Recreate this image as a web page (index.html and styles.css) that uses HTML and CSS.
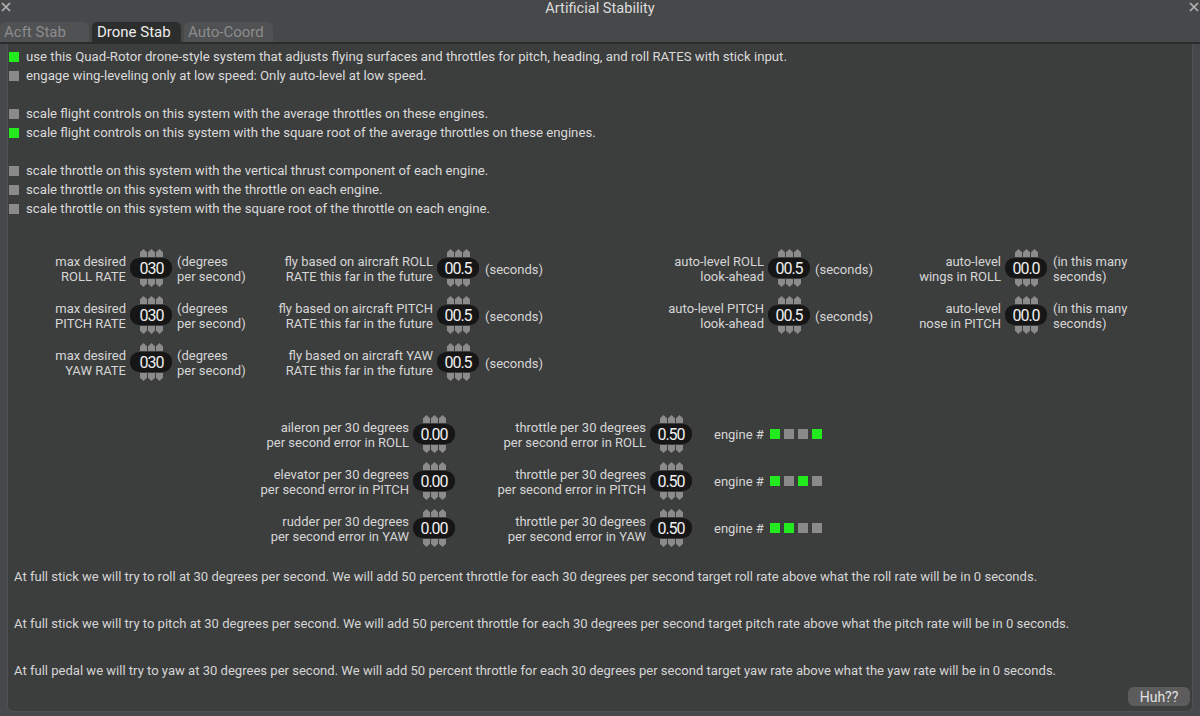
FILE: index.html
```html
<!DOCTYPE html>
<html lang="en">
<head>
    <meta charset="UTF-8">
    <title>Artificial Stability</title>
    <link rel="stylesheet" href="styles.css">
</head>
<body>
    <div class="titlebar">
        <svg class="close" viewBox="0 0 10 10"><path d="M1 1L9 9M9 1L1 9"/></svg>
        <span class="title">Artificial Stability</span>
        <svg class="close" viewBox="0 0 10 10"><path d="M1 1L9 9M9 1L1 9"/></svg>
    </div>
    <div class="tabs">
        <div class="tab">Acft Stab</div>
        <div class="tab active">Drone Stab</div>
        <div class="tab">Auto-Coord</div>
    </div>
    <div class="panel">
        <ul class="opts">
            <li><i class="chk on"></i>use this Quad-Rotor drone-style system that adjusts flying surfaces and throttles for pitch, heading, and roll RATES with stick input.</li>
            <li><i class="chk"></i>engage wing-leveling only at low speed: Only auto-level at low speed.</li>
            <li class="blank"></li>
            <li><i class="chk"></i>scale flight controls on this system with the average throttles on these engines.</li>
            <li><i class="chk on"></i>scale flight controls on this system with the square root of the average throttles on these engines.</li>
            <li class="blank"></li>
            <li><i class="chk"></i>scale throttle on this system with the vertical thrust component of each engine.</li>
            <li><i class="chk"></i>scale throttle on this system with the throttle on each engine.</li>
            <li><i class="chk"></i>scale throttle on this system with the square root of the throttle on each engine.</li>
        </ul>

        <div class="rates" id="rates"></div>
        <div class="gains" id="gains"></div>

        <div class="notes">
            <p>At full stick we will try to roll at 30 degrees per second. We will add 50 percent throttle for each 30 degrees per second target roll rate above what the roll rate will be in 0 seconds.</p>
            <p>At full stick we will try to pitch at 30 degrees per second. We will add 50 percent throttle for each 30 degrees per second target pitch rate above what the pitch rate will be in 0 seconds.</p>
            <p>At full pedal we will try to yaw at 30 degrees per second. We will add 50 percent throttle for each 30 degrees per second target yaw rate above what the yaw rate will be in 0 seconds.</p>
        </div>
        <div class="foot"><button class="huh">Huh??</button></div>
    </div>
    <script>
        // each spinner: label, value, unit
        const rates = [
            ["max desired<br>ROLL RATE", "030", "(degrees<br>per second)"],
            ["fly based on aircraft ROLL<br>RATE this far in the future", "00.5", "(seconds)"],
            ["auto-level ROLL<br>look-ahead", "00.5", "(seconds)"],
            ["auto-level<br>wings in ROLL", "00.0", "(in this many<br>seconds)"],
            ["max desired<br>PITCH RATE", "030", "(degrees<br>per second)"],
            ["fly based on aircraft PITCH<br>RATE this far in the future", "00.5", "(seconds)"],
            ["auto-level PITCH<br>look-ahead", "00.5", "(seconds)"],
            ["auto-level<br>nose in PITCH", "00.0", "(in this many<br>seconds)"],
            ["max desired<br>YAW RATE", "030", "(degrees<br>per second)"],
            ["fly based on aircraft YAW<br>RATE this far in the future", "00.5", "(seconds)"],
            null,
            null
        ];

        const gains = [
            ["aileron per 30 degrees<br>per second error in ROLL", "0.00", "throttle per 30 degrees<br>per second error in ROLL", "0.50", [1, 0, 0, 1]],
            ["elevator per 30 degrees<br>per second error in PITCH", "0.00", "throttle per 30 degrees<br>per second error in PITCH", "0.50", [1, 0, 1, 0]],
            ["rudder per 30 degrees<br>per second error in YAW", "0.00", "throttle per 30 degrees<br>per second error in YAW", "0.50", [1, 1, 0, 0]]
        ];

        function spinner(value) {
            let digits = "";
            for (const ch of value) {
                digits += ch === "." ? `<span class="pt">.</span>` : `<span class="dg">${ch}</span>`;
            }
            return `<div class="spin">
                <div class="arrows up"><i></i><i></i><i></i></div>
                <div class="val${value.includes(".") ? " dec" : ""}">${digits}</div>
                <div class="arrows down"><i></i><i></i><i></i></div>
            </div>`;
        }

        let html = "";
        rates.forEach(item => {
            if (!item) {
                html += `<div></div><div></div><div></div>`;
                return;
            }
            html += `<div class="lbl">${item[0]}</div>${spinner(item[1])}<div class="unit">${item[2]}</div>`;
        });
        document.getElementById("rates").innerHTML = html;

        html = "";
        gains.forEach(item => {
            let leds = item[4].map(on => `<i class="chk${on ? " on" : ""}"></i>`).join("");
            html += `<div class="lbl">${item[0]}</div>${spinner(item[1])}
                <div class="lbl">${item[2]}</div>${spinner(item[3])}
                <div class="engine">engine #<span class="leds">${leds}</span></div>`;
        });
        document.getElementById("gains").innerHTML = html;
    </script>
</body>
</html>
```

FILE: styles.css
```css
body { margin: 0; width: 1200px; height: 716px; overflow: hidden; background: #474849; font-family: Roboto, "Liberation Sans", sans-serif; font-size: 13px; color: #d6d6d6; display: flex; flex-direction: column; }

.titlebar { height: 20px; display: flex; align-items: flex-start; justify-content: space-between; padding: 0 1px; }
.title { font-size: 14.6px; line-height: 16px; color: #dcdcdc; }
.close { width: 10px; height: 10px; margin-top: 2px; }
.close path { stroke: #b4b4b4; stroke-width: 1.7; fill: none; }

.tabs { display: flex; gap: 3px; height: 20px; margin-top: 2px; border-bottom: 2px solid #2a2b2b; }
.tab { width: 89px; background: #505153; color: #8c8c8c; font-size: 15px; line-height: 20px; padding-left: 4px; box-sizing: border-box; border-radius: 5px 5px 0 0; }
.tab.active { background: #2c2d2d; color: #ececec; padding-left: 5px; }

.panel { flex: 1; margin: 0 7px 4px; background: #3c3d3d; border: 1px solid #4f5051; border-top: none; border-radius: 0 0 6px 6px; display: flex; flex-direction: column; }

.opts { list-style: none; margin: 0; padding: 3px 0 0 1px; font-size: 13.2px; }
.opts li { height: 19px; display: flex; align-items: center; gap: 7px; white-space: nowrap; color: #dadada; }
.chk { display: inline-block; width: 10px; height: 10px; background: #8a8a8a; }
.chk.on { background: #22ea1e; }

.rates { display: grid; grid-template-columns: 122px 42px 88px 177px 42px 121px 168px 42px 70px 125px 42px auto; row-gap: 9px; margin-top: 31px; }
.gains { display: grid; grid-template-columns: 405px 42px 195px 42px auto; row-gap: 9px; margin-top: 34px; }
.lbl { text-align: right; padding-right: 4px; line-height: 15px; align-self: center; white-space: nowrap; margin-top: 2px; }
.unit { padding-left: 5px; line-height: 15px; align-self: center; white-space: nowrap; margin-top: 2px; }
.rates .unit:nth-child(6n) { padding-left: 6px; }

.spin { display: flex; flex-direction: column; gap: 1px; }
.arrows { display: flex; gap: 1px; padding-left: 10px; height: 8px; }
.arrows i { width: 7px; height: 8px; background: #8b8b8b; }
.arrows.up i { clip-path: polygon(50% 0, 100% 40%, 100% 100%, 0 100%, 0 40%); }
.arrows.down i { clip-path: polygon(0 0, 100% 0, 100% 60%, 50% 100%, 0 60%); }
.val { height: 20px; background: #161616; border-radius: 9px; display: flex; align-items: center; padding-left: 10px; color: #f0f0f0; font-size: 16px; }
.val.dec { padding-left: 8px; }
.dg { width: 8px; display: flex; justify-content: center; }
.pt { width: 3px; display: flex; justify-content: center; }

.engine { padding-left: 22px; display: flex; align-items: center; gap: 6px; white-space: nowrap; }
.leds { display: flex; gap: 4px; }
.leds .chk { width: 10px; height: 10px; }

.notes { margin-top: 22px; padding-left: 6px; font-size: 13.05px; }
.notes p { margin: 0 0 32px; line-height: 15px; white-space: nowrap; }
.notes p:last-child { margin-bottom: 0; }

.foot { display: flex; justify-content: flex-end; padding: 9px 2px 0; }
.huh { width: 62px; height: 19px; border: none; border-radius: 6px; background: #5c5c5c; color: #e2e2e2; font-family: Roboto, "Liberation Sans", sans-serif; font-size: 14px; padding: 0; }
```
